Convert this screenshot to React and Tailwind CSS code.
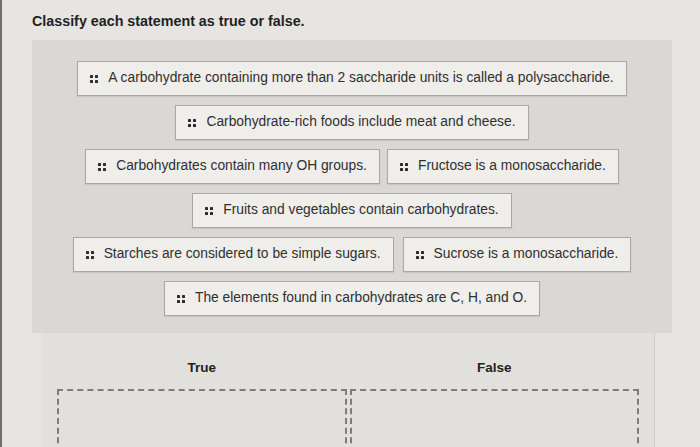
import React from 'react';

const Grip = () => (
  <svg width="9" height="8" viewBox="0 0 9 8" className="shrink-0">
    <rect x="0" y="0" width="3" height="3" rx="0.6" fill="#2b2b2b" />
    <rect x="5" y="0" width="3" height="3" rx="0.6" fill="#2b2b2b" />
    <rect x="0" y="5" width="3" height="3" rx="0.6" fill="#2b2b2b" />
    <rect x="5" y="5" width="3" height="3" rx="0.6" fill="#2b2b2b" />
  </svg>
);

const Card = ({ children }) => (
  <div className="flex items-center gap-[9px] h-[35px] px-[12px] bg-[#efeeeb] border border-[#a9a8a5] shadow-[0_1px_1px_rgba(0,0,0,0.08)] text-[13.8px] text-[#2f2f2f] whitespace-nowrap">
    <Grip />
    <span>{children}</span>
  </div>
);

const rows = [
  ['A carbohydrate containing more than 2 saccharide units is called a polysaccharide.'],
  ['Carbohydrate-rich foods include meat and cheese.'],
  ['Carbohydrates contain many OH groups.', 'Fructose is a monosaccharide.'],
  ['Fruits and vegetables contain carbohydrates.'],
  ['Starches are considered to be simple sugars.', 'Sucrose is a monosaccharide.'],
  ['The elements found in carbohydrates are C, H, and O.'],
];

export default function App() {
  return (
    <div className="w-[700px] h-[447px] overflow-hidden bg-[#e6e5e2] flex font-['Liberation_Sans',Arial,sans-serif]">
      <div className="w-[2px] bg-[#6f6e6b] shrink-0" />
      <div className="flex-1 flex flex-col">
        <div className="h-[5px] bg-[#eceae7]" />
        <div className="h-[3px] bg-[#8aa5d3]" />
        <div className="pl-[30px] pr-[28px] pt-[10px]">
          <h1 className="text-[14.3px] font-bold text-[#1f1f1f] h-[22px] leading-[22px]">
            Classify each statement as true or false.
          </h1>
          <div className="mt-[8px] bg-[#d9d8d4] pt-[21px] pb-[17px] flex flex-col items-center gap-[9px]">
            {rows.map((row, i) => (
              <div key={i} className={i === 4 ? 'flex gap-[9px]' : 'flex gap-[7px]'}>
                {row.map((t) => (
                  <Card key={t}>{t}</Card>
                ))}
              </div>
            ))}
          </div>
          <div className="ml-[10px] mr-[17px] bg-[#e1e0dc] border-r border-[#cfcecb] pt-[26px] px-[15px] grid grid-cols-2 gap-[3px] h-[120px]">
            {['True', 'False'].map((label) => (
              <div key={label} className="flex flex-col">
                <div className="text-center text-[13.5px] font-bold text-[#222] h-[18px] leading-[18px]">
                  {label}
                </div>
                <div className="mt-[12px] flex-1 border-2 border-dashed border-[#7d7c79] border-b-0" />
              </div>
            ))}
          </div>
        </div>
      </div>
    </div>
  );
}
